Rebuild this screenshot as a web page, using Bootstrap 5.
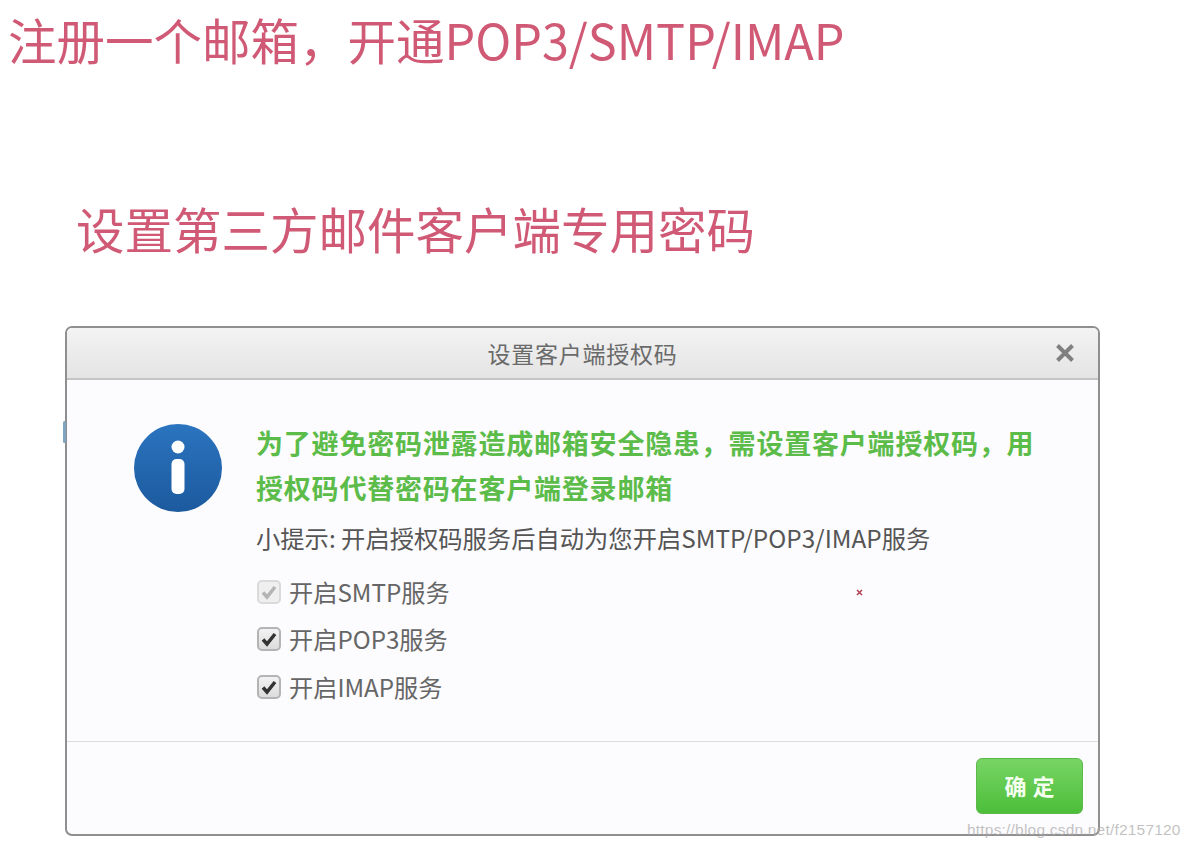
<!DOCTYPE html>
<html lang="zh"><head><meta charset="utf-8"><title>设置客户端授权码</title>
<link href="https://cdn.jsdelivr.net/npm/bootstrap@5.3.0/dist/css/bootstrap.min.css" rel="stylesheet">
<style>
html,body{height:849px;overflow:hidden;background:#fff}
body{font-family:"Noto Sans CJK SC","Noto Sans",sans-serif;position:relative}
.hd-one,.hd-two{font-size:48.5px;font-weight:400;color:#d05a75;line-height:64px;margin:0;white-space:nowrap}
.hd-one{padding:7px 0 0 8px}
.hd-two{padding:125px 0 0 76px}
.dlg{margin:66px 0 0 65px;width:1035px;height:510px;border:2px solid #8f8f8f;border-radius:7px;background:#fcfbfd;color:#555;overflow:hidden}
.dlg-top{height:52px;background:linear-gradient(#f3f3f3,#e4e4e4);border-bottom:2px solid #c4c4c4;font-size:23px;color:#6a6a6a;padding:0 23px 0 0}
.dlg-title{flex:1;text-align:center;padding-left:43px;line-height:50px;letter-spacing:.75px}
.dlg-main{height:362px;padding:43px 50px 0 66px;gap:33px;border-bottom:1px solid #dcdcdc}
.info-ic{width:90px;height:90px;flex:none}
.msg-green{font-size:27px;font-weight:700;color:#5cbc4a;line-height:45px;letter-spacing:.8px;margin:-3px 0 0 0}
.msg-hint{font-size:24.3px;color:#555;line-height:34px;margin:11px 0 13px;white-space:nowrap}
.opt{height:47.5px;font-size:24.2px;color:#666;gap:9px;white-space:nowrap}
.box{width:24px;height:24px;flex:none;margin-left:1px;margin-right:-1px;border:2px solid #b4b4b4;border-radius:5px;background:linear-gradient(#f2f2f2,#dcdcdc);display:flex;align-items:center;justify-content:center}
.box.off{border-color:#dadada;background:#efefef}
.dlg-foot{height:92px;padding:16px 15px 0 0}
.ok-btn{width:107px;height:56px;background:linear-gradient(#78d565,#4cbe3a);border:1px solid #5cb84b;border-radius:6px;color:#f4fff0;font-size:22px;font-weight:700;letter-spacing:6px;padding:0 0 2px 6px}
.ok-btn:hover{background:linear-gradient(#78d565,#4cbe3a);color:#f4fff0;border-color:#5cb84b}
.mark-x{position:absolute;left:856px;top:589px;width:7px;height:7px}
.mark-b{position:absolute;left:63px;top:421px;width:3px;height:22px;background:#7fa4c0;border-radius:2px}
.wm{position:absolute;left:967px;top:820px;font-family:"Liberation Sans",sans-serif;font-size:15.5px;color:rgba(170,170,170,.72);letter-spacing:.2px;line-height:20px}
</style></head><body>
<h1 class="hd-one">注册一个邮箱，开通POP3/SMTP/IMAP</h1>
<h2 class="hd-two">设置第三方邮件客户端专用密码</h2>
<div class="mark-b"></div>
<div class="dlg d-flex flex-column">
  <div class="dlg-top d-flex align-items-center">
    <div class="dlg-title">设置客户端授权码</div>
    <svg width="20" height="20" viewBox="0 0 20 20"><path d="M2.500 2.500 17.500 17.500M17.500 2.500 2.500 17.500" stroke="#808080" stroke-width="4"/></svg>
  </div>
  <div class="dlg-main d-flex">
    <svg class="info-ic" viewBox="0 0 90 90"><defs><linearGradient id="g" x1="0" y1="0" x2="0" y2="1"><stop offset="0" stop-color="#2b74bf"/><stop offset="1" stop-color="#1c5a9e"/></linearGradient></defs><circle cx="45" cy="45" r="44" fill="url(#g)"/><circle cx="45" cy="24" r="6.500" fill="#fff"/><rect x="38.500" y="36" width="13" height="35" rx="5" fill="#fff"/></svg>
    <div class="flex-grow-1">
      <p class="msg-green">为了避免密码泄露造成邮箱安全隐患，需设置客户端授权码，用授权码代替密码在客户端登录邮箱</p>
      <p class="msg-hint">小提示: 开启授权码服务后自动为您开启SMTP/POP3/IMAP服务</p>
      <div class="opt d-flex align-items-center"><span class="box off"><svg width="18" height="18" viewBox="0 0 18 18"><path d="M3 9.500 7 14 15 4" fill="none" stroke="#b4b4b4" stroke-width="3.500"/></svg></span>开启SMTP服务</div>
      <div class="opt d-flex align-items-center"><span class="box"><svg width="18" height="18" viewBox="0 0 18 18"><path d="M3 9.500 7 14 15 4" fill="none" stroke="#333" stroke-width="3.500"/></svg></span>开启POP3服务</div>
      <div class="opt d-flex align-items-center"><span class="box"><svg width="18" height="18" viewBox="0 0 18 18"><path d="M3 9.500 7 14 15 4" fill="none" stroke="#333" stroke-width="3.500"/></svg></span>开启IMAP服务</div>
    </div>
  </div>
  <div class="dlg-foot d-flex justify-content-end align-items-start">
    <button type="button" class="btn ok-btn">确定</button>
  </div>
</div>
<svg class="mark-x" viewBox="0 0 7 7"><path d="M1 1 6 6M6 1 1 6" stroke="#b04050" stroke-width="1.500"/></svg>
<div class="wm">https://blog.csdn.net/f2157120</div>
</body></html>
